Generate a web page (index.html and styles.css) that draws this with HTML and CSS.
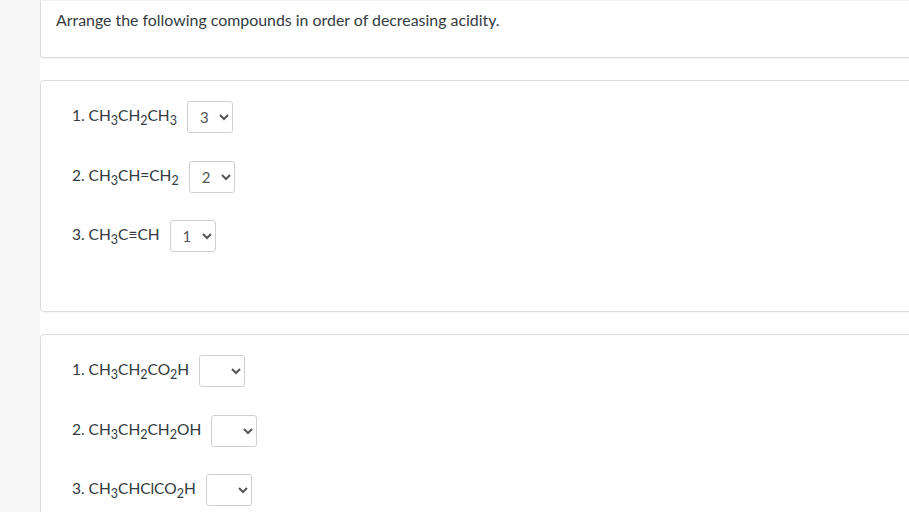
FILE: index.html
```html
<!DOCTYPE html>
<html lang="en">
<head>
<meta charset="utf-8">
<title>Acidity</title>
<link rel="stylesheet" href="styles.css">
</head>
<body>
<div class="page">
  <aside class="rail"></aside>
  <main class="content">
    <section class="card card-head">
      <p class="prompt">Arrange the following compounds in order of decreasing acidity.</p>
    </section>
    <section class="card card-q">
      <div class="row">1. CH<sub>3</sub>CH<sub>2</sub>CH<sub>3</sub> <select class="pick"><option>3</option></select></div>
      <div class="row">2. CH<sub>3</sub>CH=CH<sub>2</sub> <select class="pick"><option>2</option></select></div>
      <div class="row">3. CH<sub>3</sub>C≡CH <select class="pick"><option>1</option></select></div>
    </section>
    <section class="card card-q">
      <div class="row">1. CH<sub>3</sub>CH<sub>2</sub>CO<sub>2</sub>H <select class="pick"><option></option></select></div>
      <div class="row">2. CH<sub>3</sub>CH<sub>2</sub>CH<sub>2</sub>OH <select class="pick"><option></option></select></div>
      <div class="row">3. CH<sub>3</sub>CHClCO<sub>2</sub>H <select class="pick"><option></option></select></div>
    </section>
  </main>
</div>
</body>
</html>
```

FILE: styles.css
```css
html, body {
  margin: 0;
  padding: 0;
  background: #ffffff;
  height: 100%;
  overflow: hidden;
}

body {
  font-family: Lato, "Noto Sans", sans-serif;
  color: #333b40;
}

.page {
  display: flex;
  min-height: 100%;
}

.rail {
  flex: 0 0 40px;
  background: #f6f6f6;
}

.content {
  flex: 1;
  min-width: 0;
  overflow: hidden;
  display: flex;
  flex-direction: column;
  gap: 22px;
}

.card {
  width: 900px;
  box-sizing: border-box;
  border: 1px solid #dcdcdc;
  border-radius: 4px;
  box-shadow: 0 1px 1px rgba(0, 0, 0, 0.04);
  background: #fff;
}

.card-head {
  height: 58px;
  border-top-color: #f2f2f2;
  border-top-left-radius: 0;
  padding: 9px 15px 0;
}

.prompt {
  margin: 0;
  font-size: 15.9px;
  line-height: 20px;
}

.card-q {
  padding: 18px 31px 61px;
  display: flex;
  flex-direction: column;
  gap: 27.5px;
}

.card-q:last-child {
  padding-bottom: 40px;
}

.row {
  display: block;
  font-size: 15.5px;
  line-height: 32px;
  height: 32px;
  white-space: nowrap;
}

.row sub {
  font-size: 12.5px;
  line-height: 0;
  vertical-align: -4px;
}

.pick {
  vertical-align: middle;
  margin-left: 6px;
  width: 46px;
  height: 32px;
  box-sizing: border-box;
  border: 1px solid #cfcfcf;
  border-radius: 3px;
  background: #fff;
  font-family: Lato, "Noto Sans", sans-serif;
  font-size: 15px;
  color: #555;
  padding: 0 0 0 8px;
}
```
